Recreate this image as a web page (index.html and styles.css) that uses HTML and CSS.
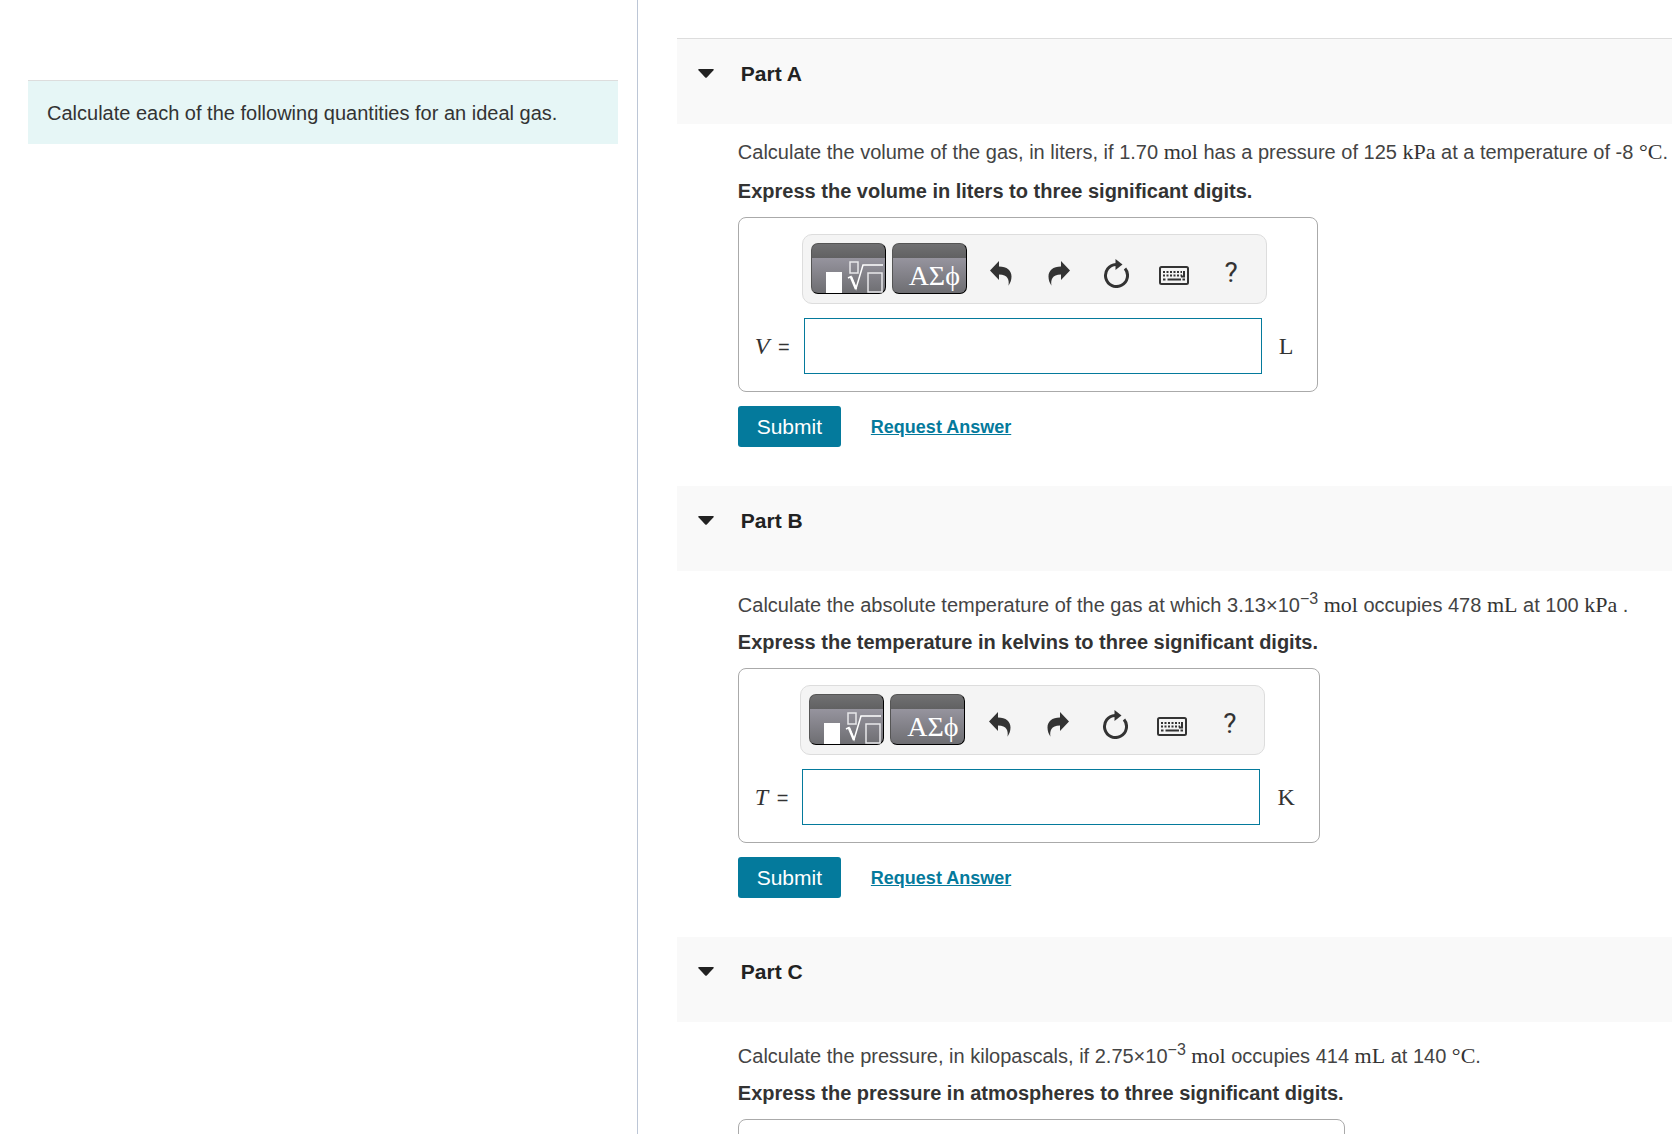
FILE: index.html
```html
<!DOCTYPE html>
<html lang="en">
<head>
<meta charset="utf-8">
<title>Ideal gas quantities</title>
<link rel="stylesheet" href="styles.css">
</head>
<body>
<svg class="defs" aria-hidden="true">
  <symbol id="i-caret" viewBox="0 0 16 9"><path d="M1 0h14q1.500 0 .5 1.200L9 8.300q-1 1-2 0L.5 1.200Q-.5 0 1 0z" fill="currentColor"/></symbol>
  <symbol id="i-root" viewBox="1 1 73 49">
    <path d="M15 29h16v21H15z" fill="#fff"/>
    <path d="M39 19h8v11h-8zM57 30h14v19H57z" fill="none" stroke="#e8e8ea" stroke-width="1.500"/>
    <path d="M37 35l3-1.500 5 12L52 22h20" fill="none" stroke="#fff" stroke-width="1.500"/>
    <path d="M40 34l5 12" stroke="#fff" stroke-width="2.500"/>
  </symbol>
  <symbol id="i-undo" viewBox="0 0 22 25"><path d="M0 9.500L9 0v5.500c8 0 12.500 4 12.500 10 0 3.500-1.200 6.500-3 9.200 1-5.500-.5-11.200-9.500-11.200V19z" fill="currentColor"/></symbol>
  <symbol id="i-redo" viewBox="0 0 22 25"><path d="M22 9.500L13 0v5.500C5 5.500.5 9.500.5 15.500c0 3.500 1.200 6.500 3 9.200-1-5.500.5-11.200 9.500-11.200V19z" fill="currentColor"/></symbol>
  <symbol id="i-reset" viewBox="0 0 26 29"><path d="M13 5.500A11 11 0 1 0 22 9.500" fill="none" stroke="currentColor" stroke-width="3"/><path d="M12.500 0l7 5.500-7 5.500z" fill="currentColor"/></symbol>
  <symbol id="i-keys" viewBox="0 0 30 19">
    <rect x="1" y="1" width="28" height="17" rx="1.500" fill="none" stroke="currentColor" stroke-width="2"/>
    <path d="M4 6h19M4 9.500h19" stroke="currentColor" stroke-width="2" stroke-dasharray="2 1.500"/>
    <path d="M4 13.500h2.500M8.500 13.500H22M23.500 13.500H26M25 5v5.500h-3" fill="none" stroke="currentColor" stroke-width="2"/>
  </symbol>
</svg>
<main class="page">
  <aside class="intro"><p class="prompt">Calculate each of the following quantities for an ideal gas.</p></aside>
  <div class="parts">
    <section class="part first">
      <header class="part-head"><svg class="caret"><use href="#i-caret"/></svg><h2>Part A</h2></header>
      <div class="part-body">
        <p class="question">Calculate the volume of the gas, in liters, if 1.70 <span class="unit">mol</span> has a pressure of 125 <span class="unit">kPa</span> at a temperature of -8 <span class="unit">°C</span>.</p>
        <p class="hint">Express the volume in liters to three significant digits.</p>
        <form class="answer">
          <div class="toolbar">
            <button type="button" class="key" aria-label="Templates"><svg class="root"><use href="#i-root"/></svg></button>
            <button type="button" class="key greek">ΑΣϕ</button>
            <button type="button" class="tool" aria-label="Undo"><svg class="arrow"><use href="#i-undo"/></svg></button>
            <button type="button" class="tool" aria-label="Redo"><svg class="arrow"><use href="#i-redo"/></svg></button>
            <button type="button" class="tool" aria-label="Reset"><svg class="reset"><use href="#i-reset"/></svg></button>
            <button type="button" class="tool" aria-label="Keyboard shortcuts"><svg class="keys"><use href="#i-keys"/></svg></button>
            <button type="button" class="tool">?</button>
          </div>
          <label class="name" for="volume"><i>V</i> =</label>
          <input class="field" id="volume" type="text">
          <span class="suffix">L</span>
        </form>
        <div class="actions"><button type="button" class="submit">Submit</button><a class="request" href="#">Request Answer</a></div>
      </div>
    </section>
    <section class="part">
      <header class="part-head"><svg class="caret"><use href="#i-caret"/></svg><h2>Part B</h2></header>
      <div class="part-body">
        <p class="question">Calculate the absolute temperature of the gas at which 3.13×10<sup>−3</sup> <span class="unit">mol</span> occupies 478 <span class="unit">mL</span> at 100 <span class="unit">kPa</span> .</p>
        <p class="hint">Express the temperature in kelvins to three significant digits.</p>
        <form class="answer">
          <div class="toolbar">
            <button type="button" class="key" aria-label="Templates"><svg class="root"><use href="#i-root"/></svg></button>
            <button type="button" class="key greek">ΑΣϕ</button>
            <button type="button" class="tool" aria-label="Undo"><svg class="arrow"><use href="#i-undo"/></svg></button>
            <button type="button" class="tool" aria-label="Redo"><svg class="arrow"><use href="#i-redo"/></svg></button>
            <button type="button" class="tool" aria-label="Reset"><svg class="reset"><use href="#i-reset"/></svg></button>
            <button type="button" class="tool" aria-label="Keyboard shortcuts"><svg class="keys"><use href="#i-keys"/></svg></button>
            <button type="button" class="tool">?</button>
          </div>
          <label class="name" for="temperature"><i>T</i> =</label>
          <input class="field" id="temperature" type="text">
          <span class="suffix">K</span>
        </form>
        <div class="actions"><button type="button" class="submit">Submit</button><a class="request" href="#">Request Answer</a></div>
      </div>
    </section>
    <section class="part">
      <header class="part-head"><svg class="caret"><use href="#i-caret"/></svg><h2>Part C</h2></header>
      <div class="part-body">
        <p class="question">Calculate the pressure, in kilopascals, if 2.75×10<sup>−3</sup> <span class="unit">mol</span> occupies 414 <span class="unit">mL</span> at 140 <span class="unit">°C</span>.</p>
        <p class="hint">Express the pressure in atmospheres to three significant digits.</p>
        <div class="answer wide"></div>
      </div>
    </section>
  </div>
</main>
</body>
</html>
```
FILE: styles.css
```css
* { box-sizing: border-box; }
body {
  margin: 0;
  background: #fff;
  color: #333;
  font: 20px/24px "Liberation Sans", Arial, sans-serif;
}
p, h2 { margin: 0; }
button { padding: 0; border: 0; color: inherit; font: inherit; }
svg { display: block; }
.defs { position: absolute; width: 0; height: 0; }

.page {
  display: grid;
  grid-template-columns: 38.15% minmax(0, 1fr);
  height: 100vh;
  overflow: hidden;
}
.intro { padding: 80px 19px 0 28px; border-right: 1px solid #bcc6d6; }
.prompt { padding: 20px 19px 19px; border-top: 1px solid #ddd; background: #e6f6f6; }

.parts { padding: 38px 0 0 39px; }
.part-head {
  display: flex;
  gap: 27px;
  height: 85px;
  padding: 22px 21px;
  background: #f9f9f9;
  color: #222;
}
.first .part-head { height: 86px; border-top: 1px solid #ddd; }
.caret { width: 16px; height: 9px; margin-top: 8px; }
h2 { font-size: 21px; line-height: 26px; }

.part-body { padding: 21px 0 39px 61px; }
.first .part-body { padding-top: 15px; }
.question { height: 26px; color: #444; line-height: 26px; }
.unit { color: #333; font: 22px/20px "Liberation Serif", serif; }
sup { font-size: 16px; line-height: 0; vertical-align: 8px; }
.hint { margin: 12px 0 14px; font-weight: bold; }
.first .hint { margin-top: 14px; }

.answer {
  display: grid;
  grid-template-columns: auto auto auto;
  align-items: center;
  row-gap: 14px;
  width: max-content;
  padding: 16px 16px 17px;
  border: 1px solid #aaa;
  border-radius: 8px;
}
.wide { width: 607px; height: 175px; }
.toolbar {
  display: flex;
  grid-column: 2 / 4;
  align-items: center;
  justify-self: start;
  width: 465px;
  height: 70px;
  margin-left: 12px;
  padding: 0 6px 0 8px;
  border: 1px solid #ddd;
  border-radius: 10px;
  background: #f4f4f4;
}
.key {
  width: 75px;
  height: 51px;
  margin: 0 6px 2px 0;
  border: 1px solid #000;
  border-color: #555 #000 #000 #555;
  border-radius: 7px;
  background: linear-gradient(#707072, #616162 14px, #96949e 14px, #6e6e72);
  color: #fff;
}
.root { width: 73px; height: 49px; }
.greek { padding: 15px 0 0 10px; font: 28px/34px "Liberation Serif", serif; }
.tool {
  display: grid;
  flex: 1;
  place-items: center;
  height: 50px;
  margin-top: 8px;
  background: none;
  font: 28px/32px Roboto, sans-serif;
}
.arrow { width: 22px; height: 25px; }
.reset { width: 26px; height: 29px; }
.keys { width: 30px; height: 19px; margin-top: 4px; }
.name i { margin-right: 3px; font: italic 24px/24px "Liberation Serif", serif; }
.field {
  width: 458px;
  height: 56px;
  margin-left: 14px;
  padding: 0 8px;
  border: 1px solid #047a9c;
  background: #fff;
  font: inherit;
}
.suffix { margin-left: 17px; padding-right: 8px; font: 24px/24px "Liberation Serif", serif; }

.actions { display: flex; align-items: center; gap: 30px; margin-top: 14px; }
.submit { width: 103px; height: 41px; border-radius: 3px; background: #047a9c; color: #fff; font-size: 21px; }
.request { color: #047a9c; font-size: 18px; font-weight: bold; }
```
